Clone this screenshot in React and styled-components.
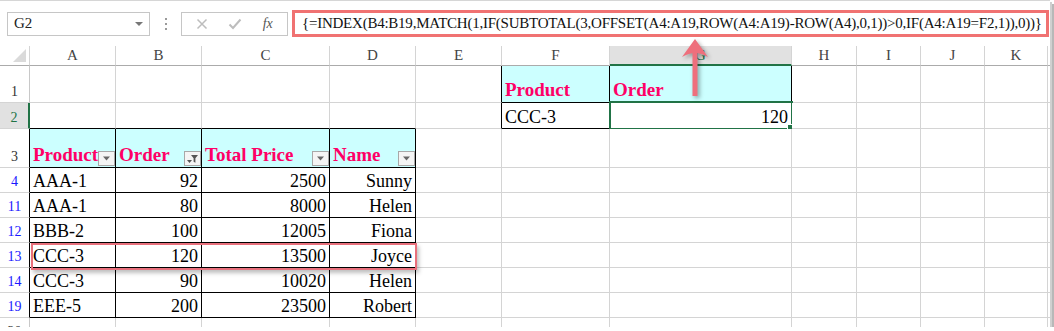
import React from 'react';
import styled, { createGlobalStyle } from 'styled-components';

const GlobalStyle = createGlobalStyle`
  * { box-sizing: border-box; }
  body {
    margin: 0;
    background: #fff;
    font-family: "Liberation Serif", "Times New Roman", serif;
  }
`;

const Frame = styled.div`
  position: relative;
  width: 1050px;
  height: 327px;
  overflow: hidden;
  background: #fff;
  border-top: 1px solid #d6d6d6;
  box-shadow: 2px 2px 0 #d0d0d0, 4px 4px 0 #b8b8b8;
`;

/* ---------- formula bar ---------- */

const TopBar = styled.div`
  height: 45px;
  display: flex;
  align-items: center;
  padding: 0 0 0 7px;
`;

const NameBox = styled.div`
  width: 143px;
  height: 24px;
  border: 1px solid #c6c6c6;
  display: flex;
  align-items: center;
  justify-content: space-between;
  padding: 0 6px 0 6px;
  font-size: 15px;
  color: #222;
`;

const Caret = styled.span`
  width: 0;
  height: 0;
  border-left: 4px solid transparent;
  border-right: 4px solid transparent;
  border-top: 4px solid #777;
`;

const Dots = styled.div`
  width: 31px;
  display: flex;
  flex-direction: column;
  align-items: center;
  gap: 3px;
  span {
    width: 2px;
    height: 2px;
    background: #9a9a9a;
  }
`;

const FxBox = styled.div`
  width: 107px;
  height: 24px;
  border: 1px solid #c6c6c6;
  display: flex;
  align-items: center;
  justify-content: space-around;
  padding: 0 4px;
`;

const FxText = styled.span`
  font-style: italic;
  font-size: 14px;
  color: #555;
  font-family: "Liberation Serif", serif;
`;

const FormulaBox = styled.div`
  margin-left: 4px;
  width: 757px;
  height: 27px;
  border: 3px solid #f07272;
  display: flex;
  align-items: center;
  padding-left: 7px;
  font-size: 15px;
  letter-spacing: -0.24px;
  color: #111;
  white-space: nowrap;
  overflow: hidden;
`;

/* ---------- sheet ---------- */

const Sheet = styled.div`
  display: grid;
  grid-template-columns: 30px 86px 86px 128px 86px 86px 108px 182px 65px 64px 64px 63px 1fr;
  grid-template-rows: 20px 37px 26px 39px repeat(7, 25px);
`;

const Corner = styled.div`
  border-right: 1px solid #d4d4d4;
  border-bottom: 1px solid #ababab;
  position: relative;
  &::after {
    content: '';
    position: absolute;
    right: 3px;
    bottom: 3px;
    border-left: 13px solid transparent;
    border-bottom: 13px solid #dadada;
  }
`;

const ColHead = styled.div`
  display: flex;
  align-items: center;
  justify-content: center;
  font-size: 15px;
  color: ${p => (p.$active ? '#217346' : '#444')};
  background: ${p => (p.$active ? '#e1e1e1' : '#fff')};
  border-right: 1px solid #d4d4d4;
  border-bottom: ${p => (p.$active ? '2px solid #217346' : '1px solid #ababab')};
`;

const RowHead = styled.div`
  display: flex;
  align-items: flex-end;
  justify-content: center;
  padding-bottom: 3px;
  font-size: 14px;
  line-height: 1;
  color: ${p => (p.$active ? '#217346' : p.$blue ? '#1a1aff' : '#333')};
  background: ${p => (p.$active ? '#e1e1e1' : '#fff')};
  border-bottom: 1px solid #d4d4d4;
  border-right: ${p => (p.$active ? '2px solid #217346' : `1px solid ${p.$edge}`)};
`;

const Cell = styled.div`
  position: relative;
  display: flex;
  align-items: flex-end;
  justify-content: ${p => (p.$right ? 'flex-end' : 'flex-start')};
  padding: 0 3px ${p => (p.$head ? '3px' : '2px')} 3px;
  border-right: 1px solid ${p => p.$br};
  border-bottom: 1px solid ${p => p.$bb};
  background: ${p => (p.$head ? '#ccffff' : '#fff')};
  color: ${p => (p.$head ? '#ff0066' : '#000')};
  font-weight: ${p => (p.$head ? 700 : 400)};
  font-size: ${p => (p.$head ? '19px' : '18px')};
  line-height: 1;
  white-space: nowrap;
`;

const Selection = styled.div`
  position: absolute;
  top: -2px;
  left: -1px;
  right: -2px;
  bottom: -2px;
  border: 2px solid #217346;
  pointer-events: none;
  &::after {
    content: '';
    position: absolute;
    right: -4px;
    bottom: -4px;
    width: 6px;
    height: 6px;
    background: #217346;
    border: 1px solid #fff;
  }
`;

const FilterBtn = styled.div`
  position: absolute;
  right: 0;
  bottom: 1px;
  width: 17px;
  height: 15px;
  border: 1px solid #a8a8a8;
  background: #f4f4f4;
  display: flex;
  align-items: center;
  justify-content: center;
`;

/* ---------- overlays ---------- */

const RowMark = styled.div`
  position: absolute;
  left: 31px;
  top: 242px;
  width: 386px;
  height: 27px;
  border: 2px solid #e8707c;
  box-shadow: 2px 3px 4px rgba(0, 0, 0, 0.25);
  pointer-events: none;
`;

const Arrow = styled.svg`
  position: absolute;
  left: 675px;
  top: 32px;
  filter: drop-shadow(2px 2px 2px rgba(0, 0, 0, 0.35));
`;

const COLS = ['A', 'B', 'C', 'D', 'E', 'F', 'G', 'H', 'I', 'J', 'K'];

const H = (text, filter) => ({ text, head: true, filter });
const R = text => ({ text, right: true });

const ROWS = [
  { label: '1', cells: { 6: H('Product'), 7: H('Order') } },
  { label: '2', active: true, cells: { 6: { text: 'CCC-3' }, 7: { ...R('120'), selected: true } } },
  {
    label: '3',
    cells: { 1: H('Product', 'arrow'), 2: H('Order', 'funnel'), 3: H('Total Price', 'arrow'), 4: H('Name', 'arrow') },
  },
  ['4', 'AAA-1', '92', '2500', 'Sunny'],
  ['11', 'AAA-1', '80', '8000', 'Helen'],
  ['12', 'BBB-2', '100', '12005', 'Fiona'],
  ['13', 'CCC-3', '120', '13500', 'Joyce'],
  ['14', 'CCC-3', '90', '10020', 'Helen'],
  ['19', 'EEE-5', '200', '23500', 'Robert'],
  { label: '20', cells: {} },
].map(r =>
  Array.isArray(r)
    ? { label: r[0], blue: true, cells: { 1: { text: r[1] }, 2: R(r[2]), 3: R(r[3]), 4: R(r[4]) } }
    : r
);

const inTable = (r, c) => (r >= 2 && r <= 8 && c >= 1 && c <= 4) || (r >= 0 && r <= 1 && c >= 6 && c <= 7);

const GRID = '#d4d4d4';
const LINE = '#000';

function FilterIcon({ kind }) {
  if (kind === 'funnel') {
    return (
      <svg width="13" height="10" viewBox="0 0 13 10">
        <path d="M1 6h5l-2.5 3z" fill="#555" />
        <path d="M5 1h7l-2.6 3.2v4.6l-1.8-1V4.2z" fill="#555" />
      </svg>
    );
  }
  return (
    <svg width="9" height="5" viewBox="0 0 9 5">
      <path d="M1 0.5h7L4.5 4.5z" fill="#666" />
    </svg>
  );
}

export default function App() {
  return (
    <>
      <GlobalStyle />
      <Frame>
        <TopBar>
          <NameBox>
            <span>G2</span>
            <Caret />
          </NameBox>
          <Dots>
            <span />
            <span />
            <span />
          </Dots>
          <FxBox>
            <svg width="12" height="12" viewBox="0 0 12 12">
              <path d="M1.5 1.5l9 9M10.5 1.5l-9 9" stroke="#bdbdbd" strokeWidth="1.5" />
            </svg>
            <svg width="14" height="12" viewBox="0 0 14 12">
              <path d="M1.5 6.5l3.5 3.5 7.5-8.5" stroke="#bdbdbd" strokeWidth="2" fill="none" />
            </svg>
            <FxText>fx</FxText>
          </FxBox>
          <FormulaBox>
            {'{=INDEX(B4:B19,MATCH(1,IF(SUBTOTAL(3,OFFSET(A4:A19,ROW(A4:A19)-ROW(A4),0,1))>0,IF(A4:A19=F2,1)),0))}'}
          </FormulaBox>
        </TopBar>

        <Sheet>
          <Corner />
          {COLS.map(c => (
            <ColHead key={c} $active={c === 'G'}>
              {c}
            </ColHead>
          ))}
          <ColHead />

          {ROWS.map((row, r) => (
            <React.Fragment key={row.label}>
              <RowHead $blue={row.blue} $active={row.active} $edge={inTable(r, 1) ? LINE : '#c8c8c8'}>
                {row.label}
              </RowHead>
              {Array.from({ length: 12 }, (_, i) => {
                const c = i + 1;
                const cell = row.cells[c] || {};
                const br = inTable(r, c) || inTable(r, c + 1) ? LINE : GRID;
                const bb = inTable(r, c) || inTable(r + 1, c) ? LINE : GRID;
                return (
                  <Cell key={c} $br={br} $bb={bb} $head={cell.head} $right={cell.right}>
                    {cell.text}
                    {cell.filter && (
                      <FilterBtn>
                        <FilterIcon kind={cell.filter} />
                      </FilterBtn>
                    )}
                    {cell.selected && <Selection />}
                  </Cell>
                );
              })}
            </React.Fragment>
          ))}
        </Sheet>

        <RowMark />
        <Arrow width="40" height="66" viewBox="0 0 40 66">
          <rect x="17.5" y="18" width="5" height="45" fill="#ee6f7c" />
          <path d="M20 6L33 24Q26 20 20 20Q14 20 7 24Z" fill="#ee6f7c" />
        </Arrow>
      </Frame>
    </>
  );
}
